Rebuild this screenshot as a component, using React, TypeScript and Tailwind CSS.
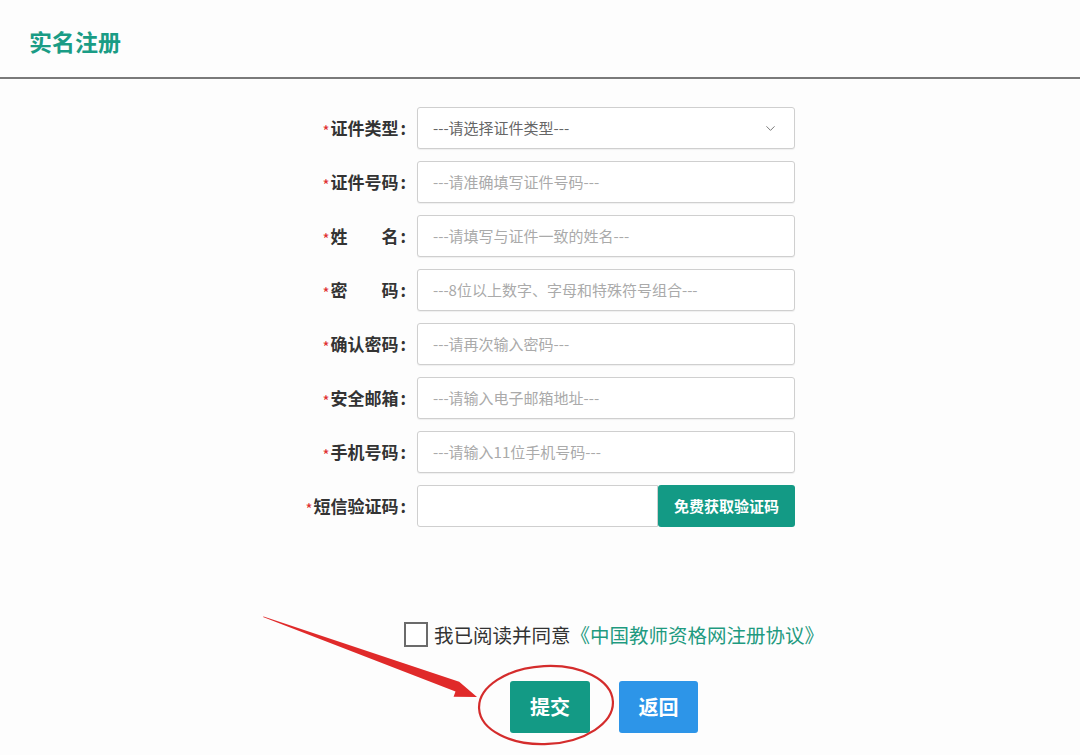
import { ChevronDown } from "lucide-react";

const fields = [
  { label: "证件类型", placeholder: "---请选择证件类型---", select: true },
  { label: "证件号码", placeholder: "---请准确填写证件号码---" },
  { label: "姓　　名", placeholder: "---请填写与证件一致的姓名---" },
  { label: "密　　码", placeholder: "---8位以上数字、字母和特殊符号组合---" },
  { label: "确认密码", placeholder: "---请再次输入密码---" },
  { label: "安全邮箱", placeholder: "---请输入电子邮箱地址---" },
  { label: "手机号码", placeholder: "---请输入11位手机号码---" },
];

const font = "font-['Noto_Sans_CJK_SC','Noto_Sans',sans-serif]";

function Label({ text }: { text: string }) {
  return (
    <div className="w-[106px] flex justify-end items-center text-[17px] font-bold text-[#333] whitespace-pre">
      <span className="text-[#e02e2e] text-[15px] font-normal mr-[1px] self-start mt-[7px]">*</span>
      <span>{text}</span>
      <span className="ml-[2px]">:</span>
    </div>
  );
}

export default function App() {
  return (
    <div className={`relative w-[1080px] h-[755px] bg-[#fdfdfd] overflow-hidden ${font}`}>
      <div className="h-[79px] border-b-2 border-[#7a7a7a] flex items-center pl-[29px] pt-[5px]">
        <h1 className="text-[23px] font-bold text-[#1a9c85]">实名注册</h1>
      </div>

      <div className="ml-[300px] w-[495px] pt-[28px] flex flex-col gap-[12px]">
        {fields.map((f) => (
          <div key={f.label} className="flex items-center gap-[11px]">
            <Label text={f.label} />
            <div className="w-[378px] h-[42px] border border-[#cfcfcf] rounded-[3px] bg-white flex items-center justify-between pl-[15px] pr-[16px] shadow-[0_1px_1px_rgba(0,0,0,0.06)]">
              <span className={`text-[15px] ${f.select ? "text-[#666]" : "text-[#aaa]"}`}>{f.placeholder}</span>
              {f.select && <ChevronDown size={15} strokeWidth={1.4} className="text-[#666]" />}
            </div>
          </div>
        ))}
        <div className="flex items-center gap-[11px]">
          <Label text="短信验证码" />
          <div className="w-[378px] h-[42px] flex">
            <div className="w-[241px] h-full border border-[#cfcfcf] rounded-l-[3px] bg-white" />
            <button className="flex-1 h-full bg-[#139a85] rounded-[3px] text-white text-[15px] font-bold">
              免费获取验证码
            </button>
          </div>
        </div>
      </div>

      <div className="ml-[404px] mt-[93px] flex items-center">
        <div className="w-[24px] h-[25px] border-2 border-[#6b6b6b] bg-white" />
        <span className="ml-[6px] text-[19.5px] text-[#333]">我已阅读并同意</span>
        <span className="text-[19.5px] text-[#1f9a80]">《中国教师资格网注册协议》</span>
      </div>

      <div className="ml-[510px] mt-[32px] flex gap-[29px]">
        <button className="w-[80px] h-[52px] rounded-[3px] bg-[#139a85] text-white text-[20px] font-bold">提交</button>
        <button className="w-[79px] h-[52px] rounded-[3px] bg-[#2d95e8] text-white text-[20px] font-bold">返回</button>
      </div>

      <svg className="absolute inset-0 pointer-events-none" width="1080" height="755">
        <polygon
          points="263,617 263.6,616.4 459.2,681.8 477,697 453.6,696.8 455.5,691.6"
          fill="#e02a2a"
        />
        <ellipse cx="546" cy="705" rx="67" ry="39" fill="none" stroke="#d42c2c" strokeWidth="2.2" transform="rotate(-3 546 705)" />
      </svg>
    </div>
  );
}
